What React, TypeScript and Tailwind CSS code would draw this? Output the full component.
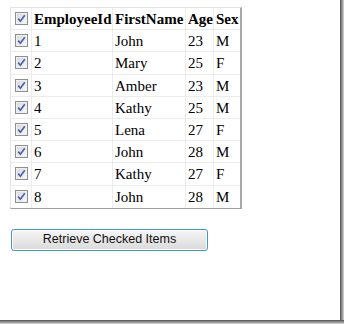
import React from "react";

const rows = [
  ["1", "John", "23", "M"],
  ["2", "Mary", "25", "F"],
  ["3", "Amber", "23", "M"],
  ["4", "Kathy", "25", "M"],
  ["5", "Lena", "27", "F"],
  ["6", "John", "28", "M"],
  ["7", "Kathy", "27", "F"],
  ["8", "John", "28", "M"],
];

function Check() {
  return (
    <svg width="13" height="13" viewBox="0 0 13 13">
      <defs>
        <linearGradient id="cbg" x1="0" y1="0" x2="1" y2="1">
          <stop offset="0" stopColor="#d6d6d6" />
          <stop offset="1" stopColor="#fbfbfb" />
        </linearGradient>
      </defs>
      <rect x="0.5" y="0.5" width="12" height="12" fill="url(#cbg)" stroke="#8e8f8f" />
      <rect x="1.5" y="1.5" width="10" height="10" fill="none" stroke="#f0f0f0" />
      <path d="M3.2 6.6 L5.4 9.2 L9.8 3.2" fill="none" stroke="#4a62b0" strokeWidth="1.7" />
    </svg>
  );
}

const colW = ["w-[21px]", "w-[81px]", "w-[73px]", "w-[28px]", "w-[26px]"];

function Row({ cells, header }: { cells: string[]; header?: boolean }) {
  return (
    <div className="flex h-[22.2px] border-b border-[#ececec] last:border-b-0">
      <div className={`${colW[0]} flex items-center justify-center border-r border-[#ececec]`}>
        <Check />
      </div>
      {cells.map((c, i) => (
        <div
          key={i}
          className={`${colW[i + 1]} flex items-center pl-[2px] pt-[2px] ${i < 3 ? "border-r border-[#ececec]" : ""} ${
            header ? "font-bold" : ""
          } whitespace-nowrap`}
        >
          {c}
        </div>
      ))}
    </div>
  );
}

export default function App() {
  return (
    <div className="w-[344px] h-[324px] flex flex-col bg-white">
      <div className="flex h-[320px]">
        <div className="w-[340px] h-[320px] bg-white pt-[7px] pl-[10px]">
          <div
            className="w-[232px] border-t border-l border-[#e4e4e4] border-r-2 border-b border-r-[#a8a8a8] border-b-[#a0a0a0] text-[15px] leading-none text-black"
            style={{ fontFamily: '"Liberation Serif", "Times New Roman", serif' }}
          >
            <Row cells={["EmployeeId", "FirstName", "Age", "Sex"]} header />
            {rows.map((r, i) => (
              <Row key={i} cells={r} />
            ))}
          </div>
          <button
            className="mt-[20px] ml-[1px] w-[197px] h-[22px] rounded-[3px] border border-[#3c97d6] bg-gradient-to-b from-[#f6f6f6] to-[#dadada] shadow-[inset_0_0_0_1px_#ffffff] text-[12.5px] text-[#111111] leading-none flex items-center justify-center"
            style={{ fontFamily: '"Liberation Sans", Arial, sans-serif' }}
          >
            Retrieve Checked Items
          </button>
        </div>
        <div className="w-[4px] h-[320px] bg-gradient-to-r from-[#505050] to-[#d8d8d8]" />
      </div>
      <div className="h-[4px] w-[344px] bg-gradient-to-b from-[#505050] to-[#d8d8d8]" />
    </div>
  );
}
